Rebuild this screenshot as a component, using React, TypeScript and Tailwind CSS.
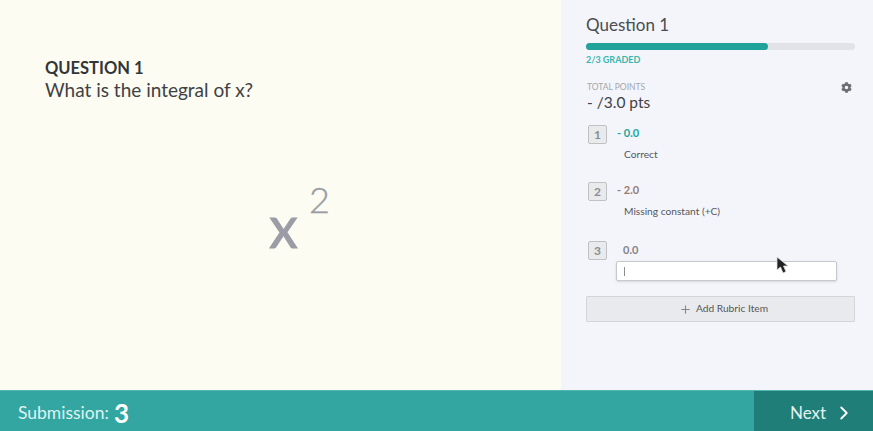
import { Plus, ChevronRight } from "lucide-react";
import { FaCog } from "react-icons/fa";

const font = { fontFamily: '"Lato", "Open Sans", sans-serif' };

const KeyBox = ({ n }: { n: number }) => (
  <div className="flex h-[19px] w-[19px] shrink-0 items-center justify-center rounded-[2px] border border-[#bfc1c5] bg-[#e9eaec] text-[12px] font-bold text-[#8b8d91]">
    {n}
  </div>
);

const RubricItem = ({ n, points, color, label }: { n: number; points: string; color: string; label: string }) => (
  <div className="flex">
    <KeyBox n={n} />
    <div className="ml-[10px]">
      <div className={`text-[11px] leading-[15px] font-bold ${color}`}>{points}</div>
      <div className="mt-[7px] ml-[7px] text-[10.2px] leading-[14px] text-[#55575b]">{label}</div>
    </div>
  </div>
);

export default function App() {
  return (
    <div className="flex h-[431px] w-[873px] flex-col overflow-hidden" style={font}>
      <div className="flex h-[390px]">
        <div className="w-[561px] bg-[#fcfcf2] pt-[58px] pl-[45px]">
          <h1 className="text-[16.5px] leading-[20px] font-bold text-[#333538]">QUESTION 1</h1>
          <p className="text-[19px] leading-[23px] text-[#3f4144]">What is the integral of x?</p>
          <div className="mt-[84px] ml-[224px] flex items-start text-[#9b9ca6]">
            <span className="mt-[11px] text-[58px] leading-[60px] font-normal [-webkit-text-stroke:0.8px_#9b9ca6]">x</span>
            <span className="mt-[-6px] ml-[11px] text-[36px] leading-[40px] font-light [-webkit-text-stroke:0.4px_#9b9ca6]">2</span>
          </div>
        </div>

        <div className="relative w-[312px] bg-[#f3f5fa] pt-[14px] pr-[18px] pl-[25px]">
          <h2 className="text-[17px] leading-[21px] text-[#4a4c4f]">Question 1</h2>
          <div className="mt-[8px] h-[7px] w-full rounded-full bg-[#e2e3e6]">
            <div className="h-full w-[67.5%] rounded-full bg-[#1fa39b]" />
          </div>
          <div className="mt-[3px] text-[9px] leading-[13px] font-bold text-[#3bb5ad]">2/3 GRADED</div>

          <div className="mt-[16px] flex items-start justify-between pr-[3px] pl-[1px]">
            <div>
              <div className="text-[8.5px] leading-[11px] text-[#a5a7ab]">TOTAL POINTS</div>
              <div className="text-[15.5px] leading-[18px] text-[#3f4144]">- /3.0 pts</div>
            </div>
            <FaCog size={11} className="text-[#6b6d71]" />
          </div>

          <div className="mt-[14px] ml-[2px]">
            <RubricItem n={1} points="- 0.0" color="text-[#22a69e]" label="Correct" />
            <div className="mt-[21px]">
              <RubricItem n={2} points="- 2.0" color="text-[#9a7a72]" label="Missing constant (+C)" />
            </div>
            <div className="mt-[23px] flex">
              <KeyBox n={3} />
              <div className="ml-[9px] flex-1">
                <div className="ml-[7px] text-[11px] leading-[18px] font-bold text-[#828488]">0.0</div>
                <div className="mt-[2px] flex h-[20px] w-[221px] items-center rounded-[2px] border border-[#c6c8cb] bg-white pl-[7px] shadow-sm">
                  <div className="h-[9px] w-px bg-[#8b8d91]" />
                </div>
              </div>
            </div>
          </div>

          <button className="mt-[15px] flex h-[26px] w-full items-center justify-center gap-[4px] rounded-[1px] border border-[#d4d5d9] bg-[#e9eaed] pl-[6px] text-[10.2px] text-[#55575b]">
            <Plus size={13} className="text-[#85878b]" />
            Add Rubric Item
          </button>

          {/* mouse pointer sits over the input */}
          <svg className="absolute top-[256px] left-[215px]" width="14" height="20" viewBox="0 0 14 20">
            <path d="M1 1 L1 14 L4.5 11 L7 17 L10 15.5 L7.5 10 L12 10 Z" fill="#222" stroke="#ddd" strokeWidth="0.8" />
          </svg>
        </div>
      </div>

      <div className="flex h-[41px] border-t border-[#55b5af] bg-[#33a6a2] text-white">
        <div className="flex flex-1 items-center pt-[4px] pl-[18px]">
          <span className="text-[17.5px] text-[#dff3f1]">Submission:</span>
          <span className="ml-[5px] text-[26px] leading-none font-bold">3</span>
        </div>
        <div className="flex w-[119px] items-center bg-[#1f7f78] pt-[4px] pl-[36px]">
          <span className="text-[17px] text-[#e3f2f0]">Next</span>
          <ChevronRight size={22} className="ml-[7px]" strokeWidth={2} />
        </div>
      </div>
    </div>
  );
}
